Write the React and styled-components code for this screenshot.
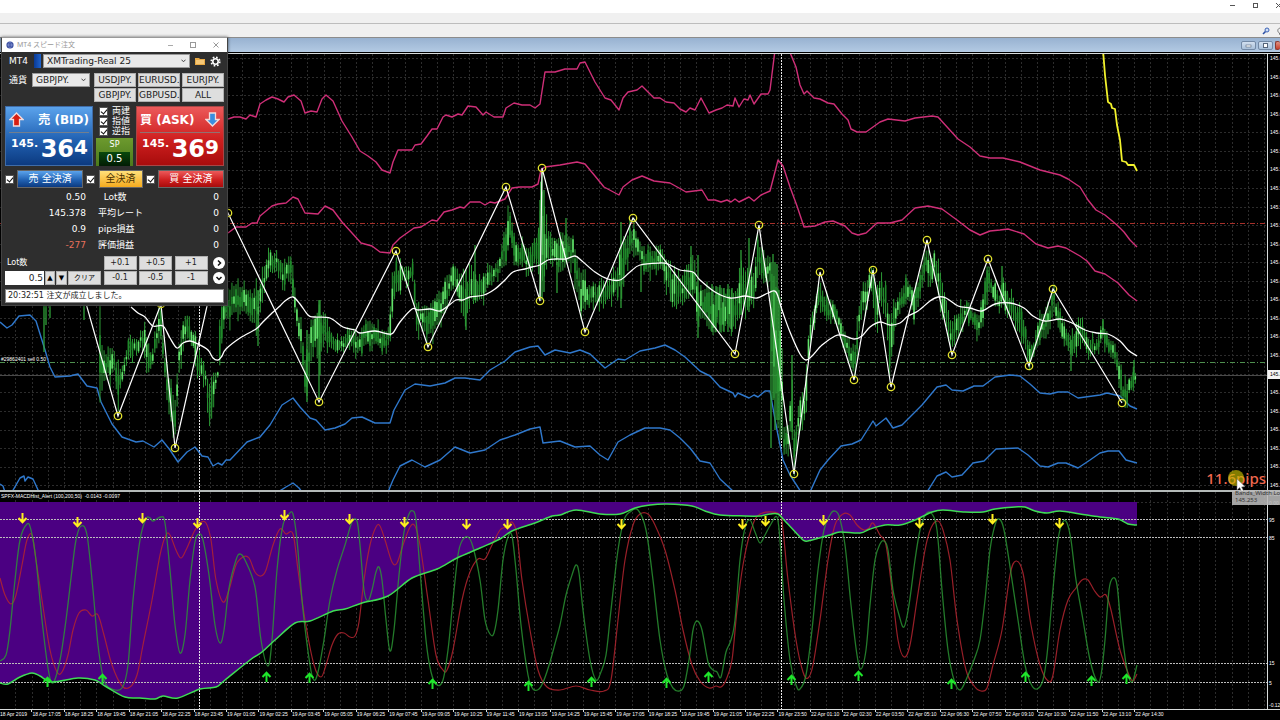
import React from "react";
import styled, { createGlobalStyle, css } from "styled-components";

const GlobalStyle = createGlobalStyle`
  * { box-sizing: border-box; }
  html, body, #root { height: 100%; margin: 0; }
  body {
    background: #000;
    overflow: hidden;
    font-family: "DejaVu Sans", "Noto Sans CJK JP", sans-serif;
  }
  button, input, select { font: inherit; margin: 0; }
`;

/* ---------- chart data ---------- */

const pinkOuterLeft = "228,119 234,117 240,117 246,119 250,115 256,117 260,104 266,100 272,97 278,99 284,102 288,97 294,95 301,101 305,113 311,111 317,112 322,99 326,95 333,101 342,121 352,137 360,151 368,156 376,162 382,170 390,173 393,162 398,150 412,150 415,145 421,144 427,136 432,129 437,129 443,117 446,115 452,117 458,114 462,115 468,106 476,107 483,115 486,112 494,117 503,117 506,108 514,103 522,105 530,105 535,108 540,104 545,72 555,72 565,69 577,69 580,63 585,62 595,82 605,98 611,100 619,110 623,98 628,92 637,90 642,86 654,98 660,98 666,102 674,103 680,109 686,112 690,108 695,110 701,98 709,113 716,110 722,108 727,105 733,106 735,98 739,107 744,99 748,100 750,95 754,104 761,94 768,94 770,90 775,50";
const pinkOuterRight = "789,50 796,67 800,85 804,94 807,91 814,98 820,99 828,103 834,104 842,114 848,120 851,129 857,132 866,132 873,127 880,122 888,119 905,121 915,118 932,116 938,117 948,128 958,139 970,147 980,156 990,158 1003,158 1020,162 1040,170 1060,175 1068,179 1080,187 1088,200 1096,210 1105,215 1117,225 1124,232 1130,240 1137,247";
const pinkInner = "228,233 236,227 246,227 252,223 257,223 260,216 266,211 272,206 278,204 286,203 293,197 298,199 305,213 318,214 325,206 333,210 342,222 352,233 361,243 372,246 380,252 390,253 393,245 400,238 414,228 421,227 432,220 437,221 444,212 452,210 460,207 464,208 470,202 480,202 485,205 490,202 495,203 505,199 512,188 520,187 532,187 538,184 541,170 545,167 560,165 577,162 585,164 595,176 604,187 619,195 623,187 632,180 642,176 654,181 670,183 679,188 686,192 702,190 708,200 715,200 721,202 727,200 731,202 735,199 739,202 749,197 754,201 761,195 770,191 776,168 778,160 783,166 790,187 797,206 804,227 815,226 825,222 833,221 845,226 852,233 858,235 866,233 877,223 890,223 902,220 915,208 928,206 942,209 957,220 970,230 980,235 990,231 1000,230 1008,229 1024,234 1036,244 1048,248 1058,246 1066,248 1080,256 1087,261 1095,271 1105,274 1118,283 1129,295 1137,301";
const yellowLine = "1103,50 1105,75 1108,102 1111,104 1112,108 1115,109 1117,125 1120,140 1122,161 1126,162 1128,165 1134,165 1137,171";
const average = "131,307 138,313 145,317 153,326 163,326 170,338 177,348 183,343 190,341 198,344 208,350 213,358 218,360 222,356 226,349 240,338 256,329 262,323 272,313 280,306 285,301 293,297 300,304 308,315 314,317 330,318 343,327 355,330 360,333 375,331 388,334 393,333 400,322 412,309 418,310 430,309 440,311 448,306 456,300 463,300 470,297 484,295 495,289 505,280 513,272 525,269 532,267 540,265 548,260 556,259 566,259 575,256 582,261 595,272 608,279 620,280 630,272 640,265 660,263 668,264 680,270 693,272 700,280 715,292 730,298 745,296 757,298 768,293 776,292 782,310 790,332 800,354 806,360 812,356 822,345 835,336 842,335 854,339 862,336 870,327 880,322 890,325 900,323 908,316 918,311 930,301 938,297 946,298 958,306 970,308 982,311 995,304 1010,303 1024,308 1033,316 1045,321 1060,319 1072,323 1085,330 1097,333 1108,334 1120,341 1128,350 1137,356"
  .split(" ")
  .map((p) => p.split(",").map(Number));
const blueInnerLeft = "0,322 7,328 12,325 19,316 30,315 36,321 45,350 50,367 55,377 70,376 78,374 87,386 97,388 101,402 112,424 122,437 136,442 143,441 154,447 162,440 170,450 178,462 187,452 195,447 202,456 208,457 213,466 218,463 222,465 226,460 230,460 247,442 260,437 270,425 282,405 293,398 300,407 310,418 316,420 325,430 335,428 345,424 352,418 362,417 375,423 390,423 394,410 405,390 415,384 430,386 445,383 455,378 465,378 480,380 490,370 505,361 515,352 530,347 538,346 545,355 555,350 570,353 580,350 590,354 605,368 618,359 625,360 640,351 655,348 665,345 675,350 685,357 700,371 710,376 720,387 733,393 735,397 738,393 749,398 754,395 758,397 765,391 770,391 776,425 783,460 790,475 801,492";
const blueInnerRight = "810,492 820,470 828,460 841,446 852,444 861,440 873,421 876,426 886,418 893,428 902,425 912,415 922,405 937,387 946,385 952,390 963,391 974,386 983,386 995,377 1010,375 1020,376 1030,384 1040,393 1050,394 1058,392 1068,392 1078,398 1100,395 1107,393 1120,396 1124,400 1130,406 1137,409";
const blueOuter = [
  "0,484 3,486 5,492",
  "12,492 20,478 24,476 25,481 28,477 33,479 39,492",
  "278,492 286,487 293,483 299,488 302,492",
  "388,492 393,480 400,466 412,460 425,467 440,460 455,447 470,453 485,450 500,440 515,435 530,429 540,427 543,443 560,441 575,447 590,446 600,455 608,460 618,442 630,435 645,428 660,428 670,430 680,438 690,448 700,461 710,463 720,479 734,492",
  "927,492 937,476 946,472 952,477 962,475 973,463 984,461 996,449 1018,448 1028,455 1040,466 1048,467 1058,463 1066,463 1078,468 1090,460 1100,453 1108,451 1119,451 1126,460 1137,463",
];
const pivots = [[60, 212], [118, 416], [161, 304], [175, 448], [228, 213], [319, 402], [396, 251], [428, 347], [506, 187], [540, 301], [542, 168], [585, 332], [633, 218], [735, 354], [759, 225], [794, 474], [820, 272], [854, 380], [873, 270], [891, 387], [927, 240], [952, 355], [988, 259], [1029, 366], [1053, 289], [1122, 403]];

/* price range along the time axis: x, high, low */
const ranges = [[100, 306, 410], [103, 345, 395], [107, 350, 370], [110, 345, 385], [114, 350, 370], [118, 365, 410], [122, 365, 385], [125, 355, 372], [130, 335, 360], [134, 333, 355], [138, 338, 358], [142, 325, 350], [145, 318, 372], [148, 345, 382], [152, 350, 372], [155, 330, 355], [158, 312, 345], [161, 306, 340], [164, 340, 370], [167, 370, 410], [172, 385, 425], [175, 400, 445], [178, 355, 400], [180, 335, 370], [184, 308, 350], [188, 315, 340], [193, 330, 350], [197, 345, 385], [200, 350, 380], [205, 362, 385], [209, 385, 430], [212, 375, 425], [215, 370, 395], [218, 370, 378], [220, 306, 370], [223, 290, 330], [230, 285, 325], [234, 278, 322], [240, 282, 318], [246, 285, 315], [252, 285, 325], [257, 275, 342], [260, 280, 320], [265, 258, 290], [270, 248, 275], [275, 253, 275], [282, 260, 282], [290, 255, 285], [293, 262, 300], [297, 305, 330], [301, 325, 350], [305, 355, 395], [308, 330, 400], [311, 325, 360], [314, 306, 355], [320, 305, 360], [326, 310, 345], [332, 335, 352], [338, 340, 354], [345, 330, 352], [350, 325, 350], [358, 332, 357], [364, 325, 350], [369, 318, 343], [375, 325, 348], [383, 330, 352], [390, 320, 350], [392, 270, 335], [395, 260, 300], [400, 265, 290], [405, 263, 280], [413, 265, 282], [417, 300, 345], [421, 305, 325], [427, 300, 347], [433, 295, 337], [440, 285, 325], [447, 270, 305], [455, 262, 290], [460, 270, 315], [466, 280, 325], [470, 260, 300], [478, 275, 310], [484, 280, 300], [487, 260, 290], [494, 265, 285], [500, 255, 275], [505, 235, 262], [508, 200, 255], [511, 215, 240], [513, 225, 265], [518, 250, 270], [525, 240, 268], [530, 245, 275], [537, 235, 268], [542, 170, 290], [545, 190, 285], [548, 230, 265], [555, 235, 268], [560, 232, 268], [566, 225, 272], [572, 235, 265], [578, 255, 300], [583, 265, 320], [588, 285, 310], [592, 280, 305], [600, 285, 310], [606, 280, 308], [612, 270, 302], [618, 265, 292], [622, 225, 300], [626, 235, 270], [633, 222, 252], [637, 230, 257], [642, 240, 270], [647, 250, 274], [655, 250, 272], [661, 240, 270], [667, 252, 290], [672, 265, 308], [676, 265, 312], [681, 270, 308], [688, 255, 300], [695, 258, 300], [697, 285, 337], [701, 288, 327], [706, 290, 325], [710, 283, 333], [735, 286, 333], [741, 260, 320], [745, 265, 312], [750, 270, 314], [756, 262, 292], [758, 228, 280], [763, 250, 285], [770, 253, 285], [772, 255, 370], [776, 262, 420], [780, 290, 440], [782, 350, 430], [784, 415, 465], [788, 425, 452], [792, 360, 440], [794, 430, 470], [797, 415, 445], [800, 405, 438], [803, 395, 430], [806, 355, 425], [808, 330, 370], [812, 310, 335], [815, 300, 320], [819, 275, 310], [823, 285, 318], [828, 300, 325], [832, 295, 325], [838, 310, 328], [842, 320, 345], [848, 335, 362], [852, 345, 375], [856, 335, 378], [858, 310, 350], [862, 285, 315], [867, 280, 305], [872, 270, 290], [876, 275, 350], [880, 275, 305], [885, 285, 312], [890, 315, 382], [893, 305, 345], [898, 292, 320], [905, 276, 305], [909, 275, 305], [914, 285, 318], [920, 270, 305], [926, 246, 275], [930, 252, 288], [935, 248, 278], [940, 275, 305], [945, 290, 330], [950, 315, 350], [956, 315, 345], [962, 305, 332], [967, 298, 318], [973, 308, 328], [979, 312, 342], [984, 280, 325], [988, 262, 292], [993, 280, 302], [1000, 290, 318], [1004, 270, 308], [1010, 295, 318], [1017, 300, 330], [1023, 310, 350], [1028, 335, 364], [1033, 340, 364], [1038, 320, 348], [1045, 312, 338], [1050, 298, 332], [1053, 290, 315], [1060, 305, 335], [1065, 320, 350], [1071, 330, 362], [1078, 325, 352], [1083, 325, 348], [1090, 335, 358], [1095, 340, 355], [1100, 325, 348], [1103, 318, 342], [1108, 332, 357], [1115, 340, 365], [1120, 355, 395], [1123, 385, 402], [1128, 378, 400], [1132, 370, 395], [1137, 370, 382]];
const longWicks = [[44, 300, 352], [46, 300, 325], [50, 300, 318], [84, 300, 320], [258, 290, 346], [293, 280, 297], [319, 300, 398], [320, 300, 375], [307, 330, 402], [466, 270, 330], [475, 245, 300], [540, 200, 298], [542, 170, 300], [544, 190, 292], [557, 262, 293], [566, 218, 262], [621, 222, 308], [641, 265, 292], [691, 246, 290], [698, 255, 338], [712, 284, 332], [716, 286, 332], [720, 285, 332], [724, 288, 332], [728, 284, 332], [732, 288, 332], [741, 250, 315], [749, 238, 312], [771, 262, 448], [773, 254, 400], [775, 262, 430], [777, 264, 420], [779, 290, 420], [792, 355, 432], [1002, 266, 300], [1071, 340, 371], [1103, 319, 335], [1134, 360, 380]];

function buildCandles() {
  let seed = 7;
  const rnd = () => {
    seed = (seed * 16807) % 2147483647;
    return seed / 2147483647;
  };
  const list = [];
  let k = 0;
  for (let x = 100; x <= 1137; x += 2.03) {
    while (k < ranges.length - 2 && ranges[k + 1][0] < x) k += 1;
    const [x0, h0, l0] = ranges[k];
    const [x1, h1, l1] = ranges[k + 1];
    const t = Math.min(1, (x - x0) / (x1 - x0));
    const hi = h0 + (h1 - h0) * t;
    const lo = l0 + (l1 - l0) * t;
    const d = lo - hi;
    const top = hi + rnd() * d * 0.25 - (rnd() > 0.8 ? 8 : 0);
    const bottom = lo - rnd() * d * 0.25 + (rnd() > 0.8 ? 8 : 0);
    const open = top + (bottom - top) * (0.1 + rnd() * 0.35);
    const close = bottom - (bottom - top) * (0.1 + rnd() * 0.35);
    list.push({ x, top, bottom, open, close: Math.max(close, open + 2), bright: rnd() > 0.62 });
  }
  return list;
}
const candles = buildCandles();

const histogram = [[0, 683], [8, 684], [20, 677], [32, 673], [40, 676], [52, 682], [78, 678], [95, 680], [105, 686], [125, 697], [140, 698], [155, 699], [163, 696], [178, 698], [200, 689], [216, 687], [225, 680], [250, 660], [262, 652], [275, 640], [295, 623], [310, 621], [333, 611], [345, 609], [362, 603], [388, 596], [412, 578], [437, 569], [457, 558], [480, 548], [500, 539], [512, 531], [535, 523], [552, 516], [560, 515], [576, 510], [600, 514], [620, 514], [635, 508], [650, 505], [667, 504], [692, 506], [705, 511], [720, 515], [745, 516], [760, 516], [770, 514], [778, 514], [785, 521], [800, 537], [805, 541], [812, 540], [830, 535], [840, 532], [860, 533], [870, 529], [885, 525], [900, 525], [915, 520], [932, 512], [943, 510], [965, 512], [983, 512], [995, 509], [1015, 507], [1025, 507], [1035, 511], [1047, 513], [1060, 511], [1080, 514], [1100, 517], [1118, 519], [1128, 524], [1137, 525]];
const fastLine = [[0, 661], [6, 655], [10, 630], [15, 580], [20, 540], [27, 524], [31, 530], [36, 560], [42, 620], [48, 668], [53, 683], [60, 660], [66, 620], [72, 570], [76, 540], [81, 526], [87, 535], [93, 590], [98, 645], [104, 680], [112, 689], [122, 688], [128, 665], [133, 600], [140, 540], [146, 519], [150, 518], [153, 521], [161, 517], [165, 523], [170, 570], [175, 625], [180, 653], [185, 635], [190, 580], [195, 542], [199, 534], [203, 540], [209, 575], [215, 625], [220, 643], [224, 630], [229, 588], [236, 560], [240, 554], [245, 560], [255, 587], [261, 640], [268, 666], [272, 640], [277, 570], [283, 525], [289, 514], [293, 514], [297, 540], [303, 610], [310, 665], [314, 680], [318, 672], [324, 640], [330, 600], [337, 570], [345, 545], [352, 522], [357, 521], [360, 545], [364, 590], [368, 601], [372, 590], [376, 572], [379, 567], [382, 580], [386, 620], [390, 651], [394, 630], [399, 575], [404, 532], [409, 514], [413, 511], [416, 520], [420, 570], [426, 640], [431, 672], [437, 685], [443, 680], [448, 650], [453, 600], [458, 555], [462, 541], [468, 537], [473, 547], [480, 580], [485, 620], [490, 634], [494, 633], [498, 610], [503, 560], [508, 537], [512, 536], [516, 570], [521, 625], [528, 675], [533, 689], [539, 689], [544, 680], [550, 662], [556, 640], [560, 625], [566, 595], [572, 575], [576, 565], [579, 573], [583, 610], [590, 660], [596, 680], [601, 672], [606, 655], [611, 610], [618, 550], [624, 520], [630, 512], [638, 510], [646, 530], [653, 580], [660, 640], [667, 675], [673, 688], [679, 691], [684, 686], [689, 660], [693, 630], [697, 621], [702, 630], [708, 662], [713, 670], [717, 672], [721, 677], [726, 652], [731, 640], [735, 620], [740, 560], [745, 528], [750, 520], [755, 532], [760, 543], [765, 535], [771, 524], [777, 517], [780, 540], [784, 600], [790, 660], [796, 685], [800, 689], [806, 675], [812, 630], [818, 570], [824, 530], [830, 515], [834, 511], [839, 516], [845, 545], [851, 605], [857, 655], [861, 669], [866, 650], [870, 605], [875, 560], [880, 544], [884, 541], [888, 550], [893, 590], [899, 615], [904, 627], [909, 605], [915, 560], [920, 530], [926, 514], [932, 514], [937, 530], [942, 590], [948, 650], [954, 680], [960, 690], [966, 680], [974, 660], [980, 640], [985, 600], [990, 550], [995, 525], [999, 519], [1004, 530], [1012, 580], [1018, 620], [1025, 665], [1031, 684], [1037, 689], [1043, 680], [1047, 655], [1052, 600], [1058, 540], [1063, 522], [1067, 523], [1071, 540], [1076, 580], [1083, 620], [1090, 660], [1097, 681], [1101, 675], [1105, 640], [1109, 590], [1113, 578], [1117, 585], [1121, 625], [1127, 670], [1132, 682], [1137, 665]];
const slowLine = [[0, 578], [5, 595], [11, 604], [16, 595], [22, 565], [27, 540], [32, 535], [36, 560], [42, 600], [50, 650], [57, 672], [62, 672], [68, 655], [73, 630], [79, 613], [86, 610], [92, 616], [98, 615], [104, 635], [112, 665], [122, 686], [130, 687], [137, 675], [143, 645], [152, 600], [160, 555], [166, 535], [170, 535], [176, 550], [181, 558], [186, 550], [194, 532], [200, 523], [206, 523], [211, 540], [216, 580], [223, 602], [229, 590], [236, 565], [243, 557], [249, 558], [255, 572], [261, 576], [266, 570], [273, 545], [280, 529], [286, 534], [293, 534], [298, 570], [305, 620], [314, 665], [321, 677], [326, 665], [332, 645], [338, 634], [344, 633], [350, 637], [355, 636], [359, 622], [364, 580], [370, 545], [376, 527], [380, 526], [385, 540], [392, 562], [397, 563], [403, 545], [410, 527], [415, 526], [420, 545], [428, 600], [436, 655], [443, 670], [447, 670], [453, 650], [462, 600], [470, 572], [478, 559], [485, 559], [492, 545], [500, 530], [506, 527], [512, 522], [517, 535], [522, 580], [530, 630], [538, 670], [547, 687], [560, 690], [576, 686], [590, 690], [604, 691], [611, 680], [618, 620], [625, 560], [633, 525], [640, 514], [648, 514], [655, 525], [665, 550], [675, 590], [683, 630], [692, 665], [700, 681], [709, 688], [716, 686], [721, 687], [726, 680], [732, 660], [737, 610], [743, 565], [751, 530], [760, 514], [779, 514], [783, 530], [788, 580], [796, 640], [803, 672], [808, 678], [813, 665], [820, 620], [828, 560], [835, 525], [843, 514], [850, 515], [857, 525], [864, 530], [869, 528], [873, 523], [880, 535], [886, 545], [892, 590], [898, 640], [904, 657], [910, 645], [917, 600], [925, 550], [931, 528], [938, 521], [943, 530], [950, 560], [957, 620], [966, 670], [975, 687], [981, 691], [987, 688], [993, 665], [1002, 630], [1010, 575], [1016, 561], [1023, 573], [1031, 625], [1040, 665], [1048, 681], [1053, 675], [1060, 630], [1068, 600], [1076, 588], [1082, 580], [1088, 580], [1094, 590], [1100, 597], [1106, 595], [1111, 610], [1120, 650], [1129, 675], [1133, 681], [1137, 674]];
const downArrows = [[22, 518], [77, 522], [142, 518], [197, 523], [284, 515], [349, 519], [404, 522], [466, 524], [507, 524], [621, 524], [742, 524], [765, 521], [823, 520], [919, 523], [992, 519], [1059, 523]];
const upArrows = [[47, 682], [102, 679], [266, 677], [309, 678], [432, 684], [528, 686], [591, 682], [666, 683], [708, 677], [791, 680], [858, 676], [951, 684], [1025, 677], [1091, 681], [1126, 679]];

const dates = ["18 Apr 2019", "18 Apr 17:05", "18 Apr 18:25", "18 Apr 19:45", "18 Apr 21:05", "18 Apr 22:25", "18 Apr 23:45", "19 Apr 01:05", "19 Apr 02:25", "19 Apr 03:45", "19 Apr 05:05", "19 Apr 06:25", "19 Apr 07:45", "19 Apr 09:05", "19 Apr 10:25", "19 Apr 11:45", "19 Apr 13:05", "19 Apr 14:25", "19 Apr 15:45", "19 Apr 17:05", "19 Apr 18:25", "19 Apr 19:45", "19 Apr 21:05", "19 Apr 22:25", "19 Apr 23:50", "22 Apr 01:10", "22 Apr 02:30", "22 Apr 03:50", "22 Apr 05:10", "22 Apr 06:30", "22 Apr 07:50", "22 Apr 09:10", "22 Apr 10:30", "22 Apr 11:50", "22 Apr 13:10", "22 Apr 14:30"];
const prices = Array.from({ length: 24 }, (_, i) => (145.688 - i * 0.019).toFixed(3));

function smooth(pts) {
  let d = `M${pts[0][0]} ${pts[0][1]}`;
  for (let i = 0; i < pts.length - 1; i += 1) {
    const p0 = pts[i - 1] || pts[i];
    const p1 = pts[i];
    const p2 = pts[i + 1];
    const p3 = pts[i + 2] || p2;
    const f = (n) => n.toFixed(1);
    d += `C${f(p1[0] + (p2[0] - p0[0]) / 6)} ${f(p1[1] + (p2[1] - p0[1]) / 6)} ${f(p2[0] - (p3[0] - p1[0]) / 6)} ${f(p2[1] - (p3[1] - p1[1]) / 6)} ${p2[0]} ${p2[1]}`;
  }
  return d;
}

/* ---------- terminal frame ---------- */

const Terminal = styled.div`
  position: relative;
  display: flex;
  flex-direction: column;
  height: 100vh;
  min-height: 480px;
  overflow: hidden;
`;

const Bar = styled.header`
  display: flex;
  align-items: center;
  justify-content: flex-end;
  flex: none;
  overflow: hidden;
`;

const TitleBar = styled(Bar)`
  height: 13px;
  gap: 16px;
  padding-bottom: 2px;
  background: #fff;
`;

const MenuBar = styled(Bar)`
  height: 11px;
  background: #f0f0f0;
  border-bottom: 1px solid #bdbdbd;
`;

const Toolbar = styled(Bar)`
  height: 14px;
  gap: 7px;
  background: #f0f0f0;
  border-bottom: 1px solid #8c8c8c;
`;

const ChartTitleBar = styled(Bar)`
  height: 14px;
  gap: 2px;
  background: linear-gradient(#98b2d1, #b3cae3);
`;

const GlyphButton = styled.button`
  display: grid;
  place-items: center;
  padding: 0;
  border: 0;
  background: none;
  width: ${(p) => p.$w}px;
  height: 10px;
  overflow: hidden;
  justify-items: start;
`;

const PaneButton = styled.button`
  display: grid;
  place-items: center;
  width: ${(p) => (p.$cut ? 5 : 15)}px;
  height: 9px;
  padding: 0;
  border: 1px solid ${(p) => (p.$cut ? "#8c3a30" : "#7389a5")};
  ${(p) => p.$cut && css`border-right: 0;`}
  border-radius: 2px;
  background: ${(p) => (p.$cut ? "linear-gradient(#e09080, #c8402c)" : "linear-gradient(#d3e0ef, #a9c0da)")};
`;

const Charts = styled.main`
  flex: 1;
  min-height: 0;
  display: grid;
  grid-template-columns: minmax(0, 1fr) 13px;
  grid-template-rows: minmax(0, 437fr) 2px minmax(0, 217fr) 11px;
  background: #000;
  border-top: 1px solid #000;
  font-family: "Liberation Sans", sans-serif;
  font-size: 5px;
  color: #fff;
`;

const Pane = styled.section`
  position: relative;
  min-height: 0;
  overflow: hidden;
  border-top: ${(p) => (p.$framed ? "1px solid #d8dcdc" : "0")};
`;

const Plot = styled.svg`
  display: block;
  width: 100%;
  height: 100%;
`;

const Divider = styled.div`
  grid-column: 1 / -1;
  background: #b4bab8;
`;

const PriceAxis = styled.div`
  display: flex;
  flex-direction: column;
  justify-content: space-between;
  position: relative;
  border-left: 1px solid #d8dcdc;
  border-top: 1px solid #d8dcdc;
  overflow: hidden;
  line-height: 9px;
`;

const Price = styled.span`
  display: block;
  padding-left: 2px;
  white-space: nowrap;
  background: ${(p) => (p.$current ? "#f4f4f4" : "none")};
  color: ${(p) => (p.$current ? "#000" : "#fff")};
`;

const LevelAxis = styled.div`
  position: relative;
  border-left: 1px solid #d8dcdc;
  overflow: hidden;
`;

const Level = styled.span`
  position: absolute;
  left: 1px;
  line-height: 8px;
  margin-top: -4px;
  white-space: nowrap;
`;

const DateAxis = styled.div`
  grid-column: 1 / -1;
  display: grid;
  grid-template-columns: repeat(39, minmax(0, 1fr));
  margin-left: -1px;
  padding-right: 16px;
  border-top: 1px solid #d8dcdc;
  overflow: hidden;
`;

const DateTick = styled.span`
  border-left: 1px solid #d8dcdc;
  height: 2px;
  line-height: 9px;
  white-space: nowrap;
`;

const ChartNote = styled.span`
  position: absolute;
  left: 1px;
  top: ${(p) => p.$top};
  line-height: 8px;
  white-space: nowrap;
`;

const PipsReadout = styled.output`
  position: absolute;
  right: 1px;
  bottom: 0;
  font-family: "Noto Sans", sans-serif;
  font-size: 15px;
  font-weight: 500;
  line-height: 24px;
  color: #f0694f;
`;

const HoverTip = styled.div`
  position: absolute;
  right: 0;
  top: 490px;
  width: 48px;
  height: 15px;
  padding-left: 3px;
  overflow: hidden;
  white-space: nowrap;
  font: 6px/7px "Noto Sans", sans-serif;
  color: #333;
  background: rgba(185, 185, 185, 0.88);
`;

const Pointer = styled.svg`
  position: absolute;
  right: 32px;
  top: 468px;
  width: 20px;
  height: 24px;
`;

/* ---------- order window ---------- */

const OrderWindow = styled.section`
  position: absolute;
  left: 1px;
  top: 37px;
  width: 227px;
  background: #2e2e2e;
  color: #fff;
  font-size: 9px;
  line-height: 14px;
  border: 1px solid #444;
  border-top-color: #999;
  box-shadow: 0 0 3px rgba(0, 0, 0, 0.6);
`;

const OrderTitle = styled.header`
  display: flex;
  align-items: center;
  height: 14px;
  padding: 0 7px 0 4px;
  gap: 3px;
  background: #fff;
  color: #999;
  font: 7px/14px "Noto Sans", "Noto Sans CJK JP", sans-serif;
`;

const OrderCaption = styled.h1`
  flex: 1;
  margin: 0;
  font: inherit;
`;

const OrderTools = styled.div`
  display: flex;
  gap: 15px;
`;

const OrderBody = styled.form`
  padding: 2px 3px 2px 3px;
`;

const AccountRow = styled.div`
  display: flex;
  align-items: center;
  height: 14px;
  padding: 0 2px 0 4px;
`;

const StatusLamp = styled.span`
  width: 7px;
  height: 14px;
  margin: 0 2px 0 6px;
  background: linear-gradient(90deg, #0a3a94, #1f63cc);
`;

const SelectWrap = styled.span`
  position: relative;
  display: block;
  width: ${(p) => p.$w}px;
  height: 14px;
`;

const Select = styled.select`
  appearance: none;
  display: block;
  width: 100%;
  height: 14px;
  padding: 0 0 0 3px;
  border: 1px solid #999;
  border-radius: 0;
  background: #e9e9e9;
  color: #222;
  line-height: 12px;
  font-size: 9px;
`;

const Chevron = styled.svg`
  position: absolute;
  right: 4px;
  top: 5px;
  width: 5px;
  height: 4px;
  pointer-events: none;
`;

const IconButton = styled.button`
  display: grid;
  place-items: center;
  padding: 0;
  border: 0;
  background: none;
  width: ${(p) => p.$s}px;
  height: ${(p) => p.$s}px;
  margin-left: 5px;
`;

const SymbolRow = styled.div`
  display: grid;
  grid-template-columns: 19px 58px 1fr;
  gap: 4px;
  margin-top: 5px;
  padding-left: 4px;
`;

const SymbolGrid = styled.div`
  display: grid;
  grid-template-columns: repeat(3, minmax(0, 1fr));
  gap: 1px 2px;
`;

const KeyButton = styled.button`
  height: 14px;
  padding: 0;
  border: 1px solid #b0b0b0;
  background: #dedede;
  color: #222;
  font-size: ${(p) => p.$size || 8}px;
  line-height: 12px;
  white-space: nowrap;
`;

const QuoteRow = styled.div`
  display: grid;
  grid-template-columns: 88px 1fr 88px;
  gap: 3px;
  margin-top: 4px;
`;

const fills = {
  sell: "linear-gradient(#5ba3ec, #2263b4 55%, #0c3a80)",
  buy: "linear-gradient(#ec5a5a, #cf2020 55%, #a80c0c)",
  both: "linear-gradient(#ffe07a, #f5ab1e)",
};

const QuoteButton = styled.button`
  display: block;
  height: 60px;
  padding: 0 3px;
  border: 1px solid ${(p) => (p.$side === "sell" ? "#3f6ca8" : "#a84545")};
  background: ${(p) => fills[p.$side]};
  color: #fff;
  text-align: left;
  font-weight: bold;
`;

const QuoteHead = styled.span`
  display: flex;
  align-items: center;
  justify-content: space-between;
  height: 26px;
  font-size: 12px;
  border-bottom: 1px solid rgba(130, 130, 130, 0.8);
`;

const QuotePrice = styled.span`
  display: flex;
  align-items: flex-start;
  justify-content: space-between;
  height: 32px;
  padding: 4px 1px 0 2px;
`;

const Figure = styled.span`
  font-size: ${(p) => p.$s}px;
  line-height: ${(p) => p.$lh}px;
`;

const FigureGroup = styled.span`
  display: flex;
`;

const Options = styled.div`
  display: flex;
  flex-direction: column;
`;

const OptionLabel = styled.label`
  display: flex;
  align-items: center;
  gap: 4px;
  height: 10px;
  padding-left: 3px;
  font-size: 9px;
  line-height: 10px;
  white-space: nowrap;
`;

const Check = styled.input`
  appearance: none;
  flex: none;
  position: relative;
  width: 9px;
  height: 9px;
  background: #fff;
  border: 1px solid #555;
  &:checked::after {
    content: "";
    position: absolute;
    left: 2px;
    top: 0;
    width: 3px;
    height: 5px;
    border: solid #111;
    border-width: 0 1px 1px 0;
    transform: rotate(40deg);
  }
`;

const Spread = styled.div`
  margin-top: auto;
  text-align: center;
  background: linear-gradient(#6d9a2e, #4b7a1c);
  font-size: 8px;
  line-height: 14px;
`;

const SpreadValue = styled.output`
  display: block;
  margin: 0 3px;
  font-size: 10px;
  line-height: 14px;
  background: linear-gradient(#08480c, #021c04);
`;

const CloseRow = styled.div`
  display: flex;
  align-items: center;
  justify-content: space-between;
  height: 18px;
  margin-top: 4px;
`;

const CloseButton = styled.button`
  width: ${(p) => (p.$side === "both" ? 44 : 66)}px;
  height: 18px;
  padding: 0;
  border: 1px solid #666;
  background: ${(p) => fills[p.$side]};
  color: ${(p) => (p.$side === "both" ? "#4a3200" : "#fff")};
  font-size: 10px;
  line-height: 16px;
  white-space: nowrap;
`;

const Stats = styled.table`
  width: 100%;
  margin-top: 1px;
  border-collapse: collapse;
  table-layout: fixed;
  td, th {
    height: 16px;
    padding: 0;
    font-weight: normal;
    line-height: 16px;
    text-align: right;
    white-space: nowrap;
  }
  th {
    width: 62px;
    padding-left: 12px;
    text-align: left;
  }
  td:first-child { width: 81px; }
  td:last-child { padding-right: 5px; }
`;

const Loss = styled.td`
  color: #e8715c;
`;

const LotGrid = styled.div`
  display: grid;
  grid-template-columns: 96px repeat(3, 33px) 14px;
  justify-content: space-between;
  align-items: center;
  gap: 1px;
  margin-top: 3px;
  font-size: 8px;
`;

const LotCaption = styled.label`
  padding-left: 2px;
`;

const LotEntry = styled.div`
  display: flex;
  gap: 1px;
`;

const LotInput = styled.input`
  width: 39px;
  height: 14px;
  padding: 0 1px;
  border: 0;
  background: #fff;
  color: #222;
  text-align: right;
  font-size: 9px;
`;

const StepButton = styled(KeyButton)`
  width: ${(p) => p.$w}px;
  color: #000;
`;

const RoundButton = styled.button`
  display: grid;
  place-items: center;
  width: 12px;
  height: 12px;
  margin-left: 3px;
  padding: 0;
  border: 0;
  border-radius: 50%;
  background: #fff;
`;

const Message = styled.output`
  display: block;
  height: 14px;
  margin-top: 4px;
  padding-left: 2px;
  background: #fff;
  color: #222;
  font-size: 8px;
  line-height: 11px;
  border: 1px solid #888;
`;

/* ---------- drawings ---------- */

const Grid = ({ top, height }) => (
  <g stroke="#2c2c2c" strokeWidth="1" strokeDasharray="2 2">
    {Array.from({ length: 78 }, (_, i) => {
      const x = Math.round(-0.8 + (i + 1) * 16.215) + 0.5;
      return <line key={x} x1={x} x2={x} y1={top} y2={top + height} />;
    })}
  </g>
);

const Period = ({ top, height }) => (
  <g stroke="#e6e6e6" strokeDasharray="2 1">
    {[199.5, 781.5].map((x) => (
      <line key={x} x1={x} x2={x} y1={top} y2={top + height} />
    ))}
  </g>
);

const PricePlot = () => (
  <Plot viewBox="0 54 1267 436" preserveAspectRatio="none" aria-label="GBPJPY price chart">
    <Grid top={54} height={436} />
    <g stroke="#2c2c2c" strokeDasharray="2 2">
      {prices.map((p, i) => {
        const y = Math.round(58.2 + i * 18.565) + 0.5;
        return <line key={p} x1="0" x2="1267" y1={y} y2={y} />;
      })}
    </g>
    <line x1="0" x2="1267" y1="375.5" y2="375.5" stroke="#4a4a4a" />
    <line x1="0" x2="1267" y1="223.5" y2="223.5" stroke="#a8302a" strokeDasharray="5 2 1 2" />
    <line x1="0" x2="1267" y1="362.5" y2="362.5" stroke="#4f8f4f" strokeDasharray="5 2 1 2" />
    <Period top={54} height={436} />
    <g fill="none" strokeWidth="1.4" strokeLinejoin="round">
      <g stroke="#cf2f78">
        <polyline points={pinkOuterLeft} />
        <polyline points={pinkOuterRight} />
        <polyline points={pinkInner} />
      </g>
      <g stroke="#2f78cc">
        <polyline points={blueInnerLeft} />
        <polyline points={blueInnerRight} />
        {blueOuter.map((p) => (
          <polyline key={p} points={p} />
        ))}
      </g>
      <polyline points={yellowLine} stroke="#f2f22c" strokeWidth="1.8" />
    </g>
    <g>
      {candles.map((c) => (
        <g key={c.x}>
          <line x1={c.x} x2={c.x} y1={c.top} y2={c.bottom} stroke="#2c9a35" strokeWidth="1" />
          <rect x={c.x - 0.8} y={c.open} width="1.6" height={c.close - c.open} fill={c.bright ? "#62e26a" : "#1f8a2a"} />
        </g>
      ))}
      {longWicks.map(([x, a, b]) => (
        <line key={`${x}-${a}`} x1={x} x2={x} y1={a} y2={b} stroke="#2fa038" strokeWidth="1.3" />
      ))}
    </g>
    <path d={smooth(average)} fill="none" stroke="#fff" strokeWidth="1.3" />
    <polyline points={pivots.map((p) => p.join(",")).join(" ")} fill="none" stroke="#fff" strokeWidth="1.2" />
    <g fill="none" stroke="#e2e22e" strokeWidth="1.3">
      {pivots.slice(1).map(([x, y]) => (
        <circle key={`${x}-${y}`} cx={x} cy={y} r="3.7" />
      ))}
    </g>
  </Plot>
);

const Arrow = ({ x, y, up }) => (
  <path
    d="M0-5V4M-4 0L0 4.3L4 0"
    transform={`translate(${x + 0.5} ${y}) scale(1 ${up ? -1 : 1})`}
    fill="none"
    stroke={up ? "#1fe62b" : "#fff01e"}
    strokeWidth="2"
  />
);

const IndicatorPlot = () => (
  <Plot viewBox="0 492 1267 217" preserveAspectRatio="none" aria-label="MACD histogram alert">
    <Grid top={492} height={217} />
    <path d={`M0 502L${histogram.map((p) => p.join(" ")).join("L")}L1137 502Z`} fill="#4b0082" />
    <line x1="1137" x2="1267" y1="502.5" y2="502.5" stroke="#2c2c2c" strokeDasharray="2 2" />
    <Period top={492} height={217} />
    <g stroke="#bdbdbd" strokeDasharray="2 1">
      {[519.5, 537.5, 663.5, 682.5].map((y) => (
        <line key={y} x1="0" x2="1267" y1={y} y2={y} />
      ))}
    </g>
    <path d={smooth(slowLine)} fill="none" stroke="#b3242f" strokeOpacity="0.85" strokeWidth="1.2" />
    <path d={smooth(fastLine)} fill="none" stroke="#2c9a35" strokeOpacity="0.8" strokeWidth="1.3" />
    <path d={smooth(histogram)} fill="none" stroke="#3fdc55" strokeWidth="1.5" />
    {downArrows.map(([x, y]) => (
      <Arrow key={x} x={x} y={y} />
    ))}
    {upArrows.map(([x, y]) => (
      <Arrow key={x} x={x} y={y} up />
    ))}
  </Plot>
);

const QuoteArrow = ({ up }) => (
  <svg width="15" height="15" viewBox="0 0 15 15" aria-hidden="true">
    <path
      d={up ? "M7.5 1L14 7.5H10.5V14H4.5V7.5H1Z" : "M7.5 14L14 7.5H10.5V1H4.5V7.5H1Z"}
      fill={up ? "#d81e10" : "#3b8ee0"}
      stroke="#f3dcdc"
      strokeWidth="1.3"
    />
  </svg>
);

const Drop = () => (
  <Chevron viewBox="0 0 5 4" aria-hidden="true">
    <path d="M0.5 0.7L2.5 2.8L4.5 0.7" fill="none" stroke="#444" />
  </Chevron>
);

const Quote = ({ side, label, whole, big, small }) => (
  <QuoteButton type="button" $side={side}>
    <QuoteHead>
      {side === "sell" && <QuoteArrow up />}
      {label}
      {side === "buy" && <QuoteArrow />}
    </QuoteHead>
    <QuotePrice>
      <Figure $s={11} $lh={14}>{whole}</Figure>
      <FigureGroup>
        <Figure $s={24} $lh={25}>{big}</Figure>
        <Figure $s={20} $lh={20}>{small}</Figure>
      </FigureGroup>
    </QuotePrice>
  </QuoteButton>
);

const OrderPanel = () => (
  <OrderWindow aria-label="MT4 スピード注文">
    <OrderTitle>
      <svg width="8" height="8" viewBox="0 0 8 8" aria-hidden="true">
        <circle cx="4" cy="4" r="3.6" fill="#3c4fa0" />
        <path d="M0.6 4H7.4M4 0.5C2 3 2 5 4 7.5M4 0.5C6 3 6 5 4 7.5" stroke="#8fa0dc" strokeWidth=".6" fill="none" />
      </svg>
      <OrderCaption>MT4 スピード注文</OrderCaption>
      <OrderTools>
        <GlyphButton type="button" $w={8} aria-label="最小化">
          <svg width="8" height="8"><path d="M2 4.5H7" stroke="#aaa" /></svg>
        </GlyphButton>
        <GlyphButton type="button" $w={8} aria-label="最大化">
          <svg width="8" height="8"><rect x="1.5" y="1.5" width="5" height="5" fill="none" stroke="#999" /></svg>
        </GlyphButton>
        <GlyphButton type="button" $w={8} aria-label="閉じる">
          <svg width="8" height="8"><path d="M1.5 1.5L6.5 6.5M6.5 1.5L1.5 6.5" stroke="#999" /></svg>
        </GlyphButton>
      </OrderTools>
    </OrderTitle>
    <OrderBody onSubmit={(e) => e.preventDefault()}>
      <AccountRow>
        <label htmlFor="account">MT4</label>
        <StatusLamp />
        <SelectWrap $w={147}>
          <Select id="account" defaultValue="a"><option value="a">XMTrading-Real 25</option></Select>
          <Drop />
        </SelectWrap>
        <IconButton type="button" $s={10} aria-label="フォルダ">
          <svg width="10" height="8" viewBox="0 0 10 8"><path d="M0 1H4L5 2H10V8H0Z" fill="#e9a944" /><path d="M1 3H9V7H1Z" fill="#f6c776" /></svg>
        </IconButton>
        <IconButton type="button" $s={11} aria-label="設定">
          <svg width="11" height="11" viewBox="0 0 11 11">
            <circle cx="5.5" cy="5.5" r="2.7" fill="none" stroke="#fff" strokeWidth="1.6" />
            <circle cx="5.5" cy="5.5" r="4.3" fill="none" stroke="#fff" strokeWidth="1.6" strokeDasharray="1.7 1.68" />
          </svg>
        </IconButton>
      </AccountRow>
      <SymbolRow>
        <label htmlFor="symbol">通貨</label>
        <SelectWrap $w={58}>
          <Select id="symbol" defaultValue="g"><option value="g">GBPJPY.</option></Select>
          <Drop />
        </SelectWrap>
        <SymbolGrid>
          {["USDJPY.", "EURUSD.", "EURJPY.", "GBPJPY.", "GBPUSD.", "ALL"].map((s) => (
            <KeyButton type="button" $size={9} key={s}>{s}</KeyButton>
          ))}
        </SymbolGrid>
      </SymbolRow>
      <QuoteRow>
        <Quote side="sell" label="売 (BID)" whole="145." big="36" small="4" />
        <Options>
          {["両建", "指値", "逆指"].map((s) => (
            <OptionLabel key={s}><Check type="checkbox" defaultChecked />{s}</OptionLabel>
          ))}
          <Spread>SP<SpreadValue>0.5</SpreadValue></Spread>
        </Options>
        <Quote side="buy" label="買 (ASK)" whole="145." big="36" small="9" />
      </QuoteRow>
      <CloseRow>
        <Check type="checkbox" defaultChecked aria-label="売 全決済" />
        <CloseButton type="button" $side="sell">売 全決済</CloseButton>
        <Check type="checkbox" defaultChecked aria-label="全決済" />
        <CloseButton type="button" $side="both">全決済</CloseButton>
        <Check type="checkbox" defaultChecked aria-label="買 全決済" />
        <CloseButton type="button" $side="buy">買 全決済</CloseButton>
      </CloseRow>
      <Stats>
        <tbody>
          <tr><td>0.50</td><th scope="row">&nbsp;&nbsp;Lot数</th><td>0</td></tr>
          <tr><td>145.378</td><th scope="row">平均レート</th><td>0</td></tr>
          <tr><td>0.9</td><th scope="row">pips損益</th><td>0</td></tr>
          <tr><Loss>-277</Loss><th scope="row">評価損益</th><td>0</td></tr>
        </tbody>
      </Stats>
      <LotGrid>
        <LotCaption htmlFor="lots">Lot数</LotCaption>
        <KeyButton type="button">+0.1</KeyButton>
        <KeyButton type="button">+0.5</KeyButton>
        <KeyButton type="button">+1</KeyButton>
        <RoundButton type="button" aria-label="次へ">
          <svg width="8" height="8"><path d="M3 1.5L5.5 4L3 6.5" fill="none" stroke="#111" strokeWidth="1.5" /></svg>
        </RoundButton>
        <LotEntry>
          <LotInput id="lots" defaultValue="0.5" />
          <StepButton type="button" $w={10} $size={7} aria-label="増やす">▲</StepButton>
          <StepButton type="button" $w={11} $size={7} aria-label="減らす">▼</StepButton>
          <StepButton type="button" $w={33} $size={7}>クリア</StepButton>
        </LotEntry>
        <KeyButton type="button">-0.1</KeyButton>
        <KeyButton type="button">-0.5</KeyButton>
        <KeyButton type="button">-1</KeyButton>
        <RoundButton type="button" aria-label="開く">
          <svg width="8" height="8"><path d="M1.5 3L4 5.5L6.5 3" fill="none" stroke="#111" strokeWidth="1.5" /></svg>
        </RoundButton>
      </LotGrid>
      <Message>20:32:51 注文が成立しました。</Message>
    </OrderBody>
  </OrderWindow>
);

export default function App() {
  return (
    <>
      <GlobalStyle />
      <Terminal>
        <TitleBar>
          <GlyphButton $w={7} aria-label="Minimize"><svg width="7" height="7"><path d="M1 3.5H6" stroke="#555" /></svg></GlyphButton>
          <GlyphButton $w={7} aria-label="Maximize"><svg width="7" height="7"><rect x="1.5" y="1.5" width="4" height="4" fill="none" stroke="#555" /></svg></GlyphButton>
          <GlyphButton $w={5} aria-label="Close"><svg width="7" height="7"><path d="M1 1L6 6M6 1L1 6" stroke="#555" /></svg></GlyphButton>
        </TitleBar>
        <MenuBar as="nav" />
        <Toolbar>
          <GlyphButton $w={8} aria-label="Search">
            <svg width="8" height="8" viewBox="0 0 8 8"><circle cx="5" cy="3" r="2" fill="#cfe0f8" stroke="#3c62b4" /><path d="M3.4 4.6L1 7" stroke="#2b4fa4" strokeWidth="1.5" /></svg>
          </GlyphButton>
          <GlyphButton $w={3} aria-label="Chat">
            <svg width="8" height="8" viewBox="0 0 8 8"><path d="M4 1C2 1 .8 2 .8 3.5S2 6 2.5 6V7.4L4 6" fill="none" stroke="#777" /></svg>
          </GlyphButton>
        </Toolbar>
        <ChartTitleBar>
          <PaneButton aria-label="Minimize chart"><svg width="7" height="5"><rect x="1" y="2" width="5" height="2" fill="#fff" stroke="#56657a" strokeWidth=".6" /></svg></PaneButton>
          <PaneButton aria-label="Restore chart"><svg width="7" height="5"><rect x="1.5" y=".5" width="4" height="4" fill="#fff" stroke="#56657a" /></svg></PaneButton>
          <PaneButton $cut aria-label="Close chart" />
        </ChartTitleBar>
        <Charts>
          <Pane $framed>
            <PricePlot />
            <ChartNote $top="69%">#29862401 sell 0.50</ChartNote>
            <PipsReadout>11.6pips</PipsReadout>
          </Pane>
          <PriceAxis>
            {prices.map((p, i) => (
              <Price key={p} $current={i === 17}>{i === 17 ? "145.364" : p}</Price>
            ))}
          </PriceAxis>
          <Divider />
          <Pane>
            <IndicatorPlot />
            <ChartNote $top="0">SPFX-MACDHist_Alert (100,200,50)&nbsp; -0.0143 -0.0097</ChartNote>
          </Pane>
          <LevelAxis>
            {[["0.1280", "1%"], ["0.00", "5%"], ["95", "13%"], ["85", "21%"], ["15", "79%"], ["5", "88%"], ["-0.128", "98%"]].map(([t, y]) => (
              <Level key={t} style={{ top: y }}>{t}</Level>
            ))}
          </LevelAxis>
          <DateAxis>
            {dates.map((d) => (
              <DateTick key={d}>{d}</DateTick>
            ))}
          </DateAxis>
        </Charts>
        <HoverTip>Bands_Width Lower<br />145.253</HoverTip>
        <Pointer viewBox="0 0 20 24" aria-hidden="true">
          <circle cx="8" cy="10" r="8" fill="#c8be00" fillOpacity=".65" />
          <path d="M9 11V22L11.7 19.6L13.6 23.6L15.4 22.7L13.6 18.9L17 18.6Z" fill="#fff" stroke="#777" strokeWidth=".5" />
        </Pointer>
        <OrderPanel />
      </Terminal>
    </>
  );
}
